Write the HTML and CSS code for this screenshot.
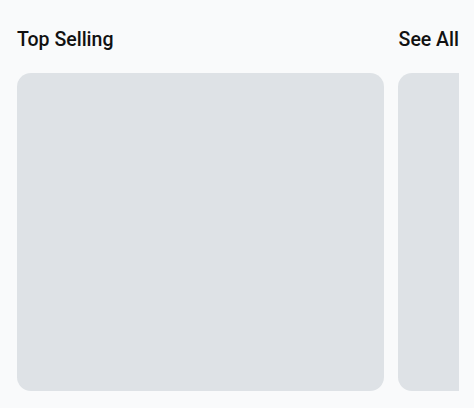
FILE: index.html
```html
<!DOCTYPE html>
<html>
<head>
<meta charset="utf-8">
<link rel="stylesheet" href="styles.css">
</head>
<body>
<section class="section">
  <div class="header">
    <h2 class="title">Top Selling</h2>
    <a class="see-all">See All</a>
  </div>
  <div class="scroller">
    <div class="card card-main"></div>
    <div class="card card-next"></div>
  </div>
</section>
</body>
</html>
```
FILE: styles.css
```css
html, body {
  margin: 0;
  padding: 0;
  background: #f9fafb;
  font-family: Roboto, "Noto Sans", sans-serif;
}
.section {
  width: 474px;
  height: 408px;
  padding: 26px 15px 0 17px;
  box-sizing: border-box;
}
.header {
  display: flex;
  justify-content: space-between;
  align-items: center;
  height: 28px;
}
.title, .see-all {
  margin: 0;
  font-size: 19.5px;
  font-weight: 500;
  color: #111111;
  line-height: 28px;
}
.scroller {
  display: flex;
  gap: 14px;
  margin-top: 19px;
  overflow: hidden;
  width: 442px;
}
.card {
  flex: 0 0 auto;
  height: 318px;
  border-radius: 14px;
  background: #dee2e6;
}
.card-main {
  width: 367px;
}
.card-next {
  width: 367px;
}
```
